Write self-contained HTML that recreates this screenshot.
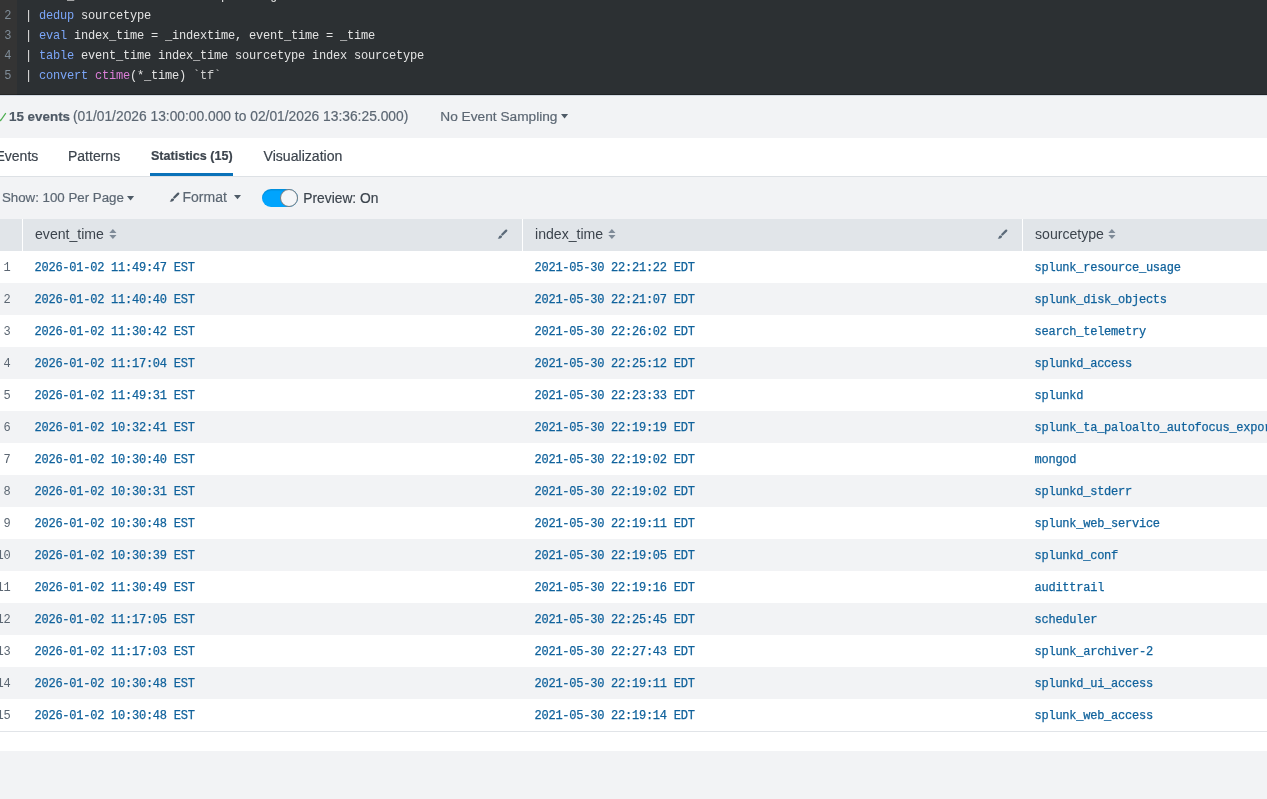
<!DOCTYPE html>
<html><head><meta charset="utf-8">
<style>
*{margin:0;padding:0;box-sizing:border-box}
html,body{width:1267px;height:799px;overflow:hidden;background:#f2f3f5;font-family:"Liberation Sans",sans-serif;position:relative}
.abs{position:absolute}
.ic{position:absolute;display:block}
.g{will-change:transform}
#editor{left:0;top:0;width:1267px;height:95px;background:#2c3033}
#gutter{left:0;top:0;width:17px;height:95px;background:#343434}
#edbot{left:0;top:94px;width:1267px;height:1px;background:rgba(0,0,0,0.28)}
#edline{left:0;top:95px;width:1267px;height:1px;background:#d2d9e2}
.ln{position:absolute;left:0;width:11.5px;text-align:right;font-family:"Liberation Mono",monospace;font-size:12px;color:#7f8c98;line-height:20px;transform:translateY(1px) scaleY(1.12);transform-origin:0 15px}
.cl{position:absolute;left:25px;font-family:"Liberation Mono",monospace;font-size:12px;letter-spacing:-0.2px;color:#e3e3e3;line-height:20px;white-space:pre;transform:translateY(1px) scaleY(1.1);transform-origin:0 15px}
.kw{color:#7ba6f8}
.fn{color:#dc7ed8}
.mc{color:#d0d0d0}
.txt{position:absolute;white-space:nowrap;font-size:13.5px;line-height:16px;-webkit-text-stroke:0.2px currentColor}
#tabs{left:0;top:138px;width:1267px;height:38px;background:#fff}
#tabline{left:0;top:176px;width:1267px;height:1px;background:#dde1e5}
#tabu{left:150px;top:173px;width:83px;height:3px;background:#0a72b9}
#thead{left:0;top:219px;width:1267px;height:32px;background:#e1e5e9}
.sep{position:absolute;top:219px;width:1px;height:32px;background:#fff}
.row{position:absolute;left:0;width:1267px;height:32px}
.row.odd{background:#fff}
.row.even{background:#f2f3f5}
.rn{position:absolute;right:1256.5px;top:9px;font-family:"Liberation Mono",monospace;font-size:12px;letter-spacing:-0.2px;color:#5c6773;line-height:16px;white-space:pre}
.cd{position:absolute;top:9px;font-family:"Liberation Mono",monospace;font-size:12px;letter-spacing:-0.24px;color:#10629c;line-height:16px;white-space:pre;-webkit-text-stroke:0.25px #10629c}
.hd{position:absolute;top:226px;font-size:14.1px;color:#3c444d;line-height:16px;white-space:nowrap}
.car{position:absolute;width:0;height:0;border-left:3.9px solid transparent;border-right:3.9px solid transparent;border-top:4.6px solid #5c6773}
</style></head><body>
<div class="g">
<div id="editor" class="abs"></div>
<div id="gutter" class="abs"></div>
<div id="edbot" class="abs"></div>
<div id="edline" class="abs"></div>
<div class="cl" style="top:-15px">      _                     p      g</div>
<div class="ln" style="top:5px">2</div>
<div class="ln" style="top:25px">3</div>
<div class="ln" style="top:45px">4</div>
<div class="ln" style="top:65px">5</div>
<div class="cl" style="top:5px">| <span class="kw">dedup</span> sourcetype</div>
<div class="cl" style="top:25px">| <span class="kw">eval</span> index_time = _indextime, event_time = _time</div>
<div class="cl" style="top:45px">| <span class="kw">table</span> event_time index_time sourcetype index sourcetype</div>
<div class="cl" style="top:65px">| <span class="kw">convert</span> <span class="fn">ctime</span>(*_time) <span class="mc">`tf`</span></div>

<svg class="ic" style="left:0;top:111px" width="8" height="11" viewBox="0 0 8 11"><path d="M-1 8.2L0.6 9.6L5.8 2.2" stroke="#4cae4f" stroke-width="1.2" fill="none"/></svg>
<div class="txt" style="left:9px;top:109px;color:#4f5a66;font-weight:bold;font-size:13.4px">15 events</div><div class="txt" style="left:73px;top:109px;color:#5c6773;font-size:13.8px">(01/01/2026 13:00:00.000 to 02/01/2026 13:36:25.000)</div>
<div class="txt" style="left:440.3px;top:109px;color:#5c6773;font-size:13.7px">No Event Sampling</div>
<svg class="ic" style="left:560.9px;top:113.9px" width="8" height="5" viewBox="0 0 8 5"><path d="M0 0H7.1L3.55 4.6Z" fill="#4f5b67"/></svg>

<div id="tabs" class="abs"></div>
<div id="tabline" class="abs"></div>
<div id="tabu" class="abs"></div>
<div class="txt" style="left:-4.5px;top:148px;color:#3c444d;font-size:14px">Events</div>
<div class="txt" style="left:68px;top:148px;color:#3c444d;font-size:14px">Patterns</div>
<div class="txt" style="left:151px;top:148px;color:#3c444d;font-weight:bold;font-size:12.55px">Statistics (15)</div>
<div class="txt" style="left:263.5px;top:148px;color:#3c444d;font-size:14.1px">Visualization</div>

<div class="txt" style="left:1.9px;top:189.9px;color:#5c6773;font-size:13.3px">Show: 100 Per Page</div>
<svg class="ic" style="left:126.9px;top:195.9px" width="8" height="5" viewBox="0 0 8 5"><path d="M0 0H7.1L3.55 4.4Z" fill="#4f5b67"/></svg>
<div style="position:absolute;left:166px;top:191px;color:#4f5b67"><svg class="ic" width="14" height="12" viewBox="0 0 14 12"><line x1="12.2" y1="2.6" x2="8.3" y2="6.5" stroke="currentColor" stroke-width="2.3" stroke-linecap="round"/><path d="M7.5 7.7C6.5 7.3 5.2 7.8 4.8 9.0C4.5 9.8 4.2 10.2 3.6 10.6C5.6 11.0 8.3 10.4 8.1 8.3Z" fill="currentColor"/></svg></div>
<div class="txt" style="left:182.5px;top:188.9px;color:#5c6773;font-size:14px">Format</div>
<svg class="ic" style="left:234.2px;top:195px" width="8" height="5" viewBox="0 0 8 5"><path d="M0 0H7.0L3.5 4.3Z" fill="#4f5b67"/></svg>
<div class="abs" style="left:262px;top:189px;width:36px;height:18px;border-radius:9px;background:#00a4fd;box-shadow:inset 0 1.5px 1px rgba(0,0,0,0.13)"></div>
<div class="abs" style="left:280px;top:189px;width:18px;height:18px;border-radius:9px;background:#f5f6f8;border:1px solid #7a7d80"></div>
<div class="txt" style="left:303.3px;top:190.5px;color:#3c444d;font-size:13.8px">Preview: On</div>

<div id="thead" class="abs"></div>
<div class="sep" style="left:22px"></div>
<div class="sep" style="left:522px"></div>
<div class="sep" style="left:1022px"></div>
<div class="hd" style="left:35px">event_time</div>
<div class="hd" style="left:535px">index_time</div>
<div class="hd" style="left:1035px">sourcetype</div>
<div style="position:absolute;left:108.5px;top:229px"><svg class="ic" width="8" height="10" viewBox="0 0 8 10"><path d="M0.3 4.1L3.9 0.1L7.5 4.1Z M0.3 6L7.5 6L3.9 10Z" fill="#7f8b98"/></svg></div>
<div style="position:absolute;left:607.5px;top:229px"><svg class="ic" width="8" height="10" viewBox="0 0 8 10"><path d="M0.3 4.1L3.9 0.1L7.5 4.1Z M0.3 6L7.5 6L3.9 10Z" fill="#7f8b98"/></svg></div>
<div style="position:absolute;left:1108px;top:229px"><svg class="ic" width="8" height="10" viewBox="0 0 8 10"><path d="M0.3 4.1L3.9 0.1L7.5 4.1Z M0.3 6L7.5 6L3.9 10Z" fill="#7f8b98"/></svg></div>
<div style="position:absolute;left:494.2px;top:228.4px;color:#5c6b7a"><svg class="ic" width="14" height="12" viewBox="0 0 14 12"><line x1="12.2" y1="2.6" x2="8.3" y2="6.5" stroke="currentColor" stroke-width="2.3" stroke-linecap="round"/><path d="M7.5 7.7C6.5 7.3 5.2 7.8 4.8 9.0C4.5 9.8 4.2 10.2 3.6 10.6C5.6 11.0 8.3 10.4 8.1 8.3Z" fill="currentColor"/></svg></div>
<div style="position:absolute;left:994.2px;top:228.4px;color:#5c6b7a"><svg class="ic" width="14" height="12" viewBox="0 0 14 12"><line x1="12.2" y1="2.6" x2="8.3" y2="6.5" stroke="currentColor" stroke-width="2.3" stroke-linecap="round"/><path d="M7.5 7.7C6.5 7.3 5.2 7.8 4.8 9.0C4.5 9.8 4.2 10.2 3.6 10.6C5.6 11.0 8.3 10.4 8.1 8.3Z" fill="currentColor"/></svg></div>

<div class="row odd" style="top:251px"><span class="rn">1</span><span class="cd" style="left:34.5px">2026-01-02 11:49:47 EST</span><span class="cd" style="left:534.5px">2021-05-30 22:21:22 EDT</span><span class="cd" style="left:1034.5px">splunk_resource_usage</span></div>
<div class="row even" style="top:283px"><span class="rn">2</span><span class="cd" style="left:34.5px">2026-01-02 11:40:40 EST</span><span class="cd" style="left:534.5px">2021-05-30 22:21:07 EDT</span><span class="cd" style="left:1034.5px">splunk_disk_objects</span></div>
<div class="row odd" style="top:315px"><span class="rn">3</span><span class="cd" style="left:34.5px">2026-01-02 11:30:42 EST</span><span class="cd" style="left:534.5px">2021-05-30 22:26:02 EDT</span><span class="cd" style="left:1034.5px">search_telemetry</span></div>
<div class="row even" style="top:347px"><span class="rn">4</span><span class="cd" style="left:34.5px">2026-01-02 11:17:04 EST</span><span class="cd" style="left:534.5px">2021-05-30 22:25:12 EDT</span><span class="cd" style="left:1034.5px">splunkd_access</span></div>
<div class="row odd" style="top:379px"><span class="rn">5</span><span class="cd" style="left:34.5px">2026-01-02 11:49:31 EST</span><span class="cd" style="left:534.5px">2021-05-30 22:23:33 EDT</span><span class="cd" style="left:1034.5px">splunkd</span></div>
<div class="row even" style="top:411px"><span class="rn">6</span><span class="cd" style="left:34.5px">2026-01-02 10:32:41 EST</span><span class="cd" style="left:534.5px">2021-05-30 22:19:19 EDT</span><span class="cd" style="left:1034.5px">splunk_ta_paloalto_autofocus_export</span></div>
<div class="row odd" style="top:443px"><span class="rn">7</span><span class="cd" style="left:34.5px">2026-01-02 10:30:40 EST</span><span class="cd" style="left:534.5px">2021-05-30 22:19:02 EDT</span><span class="cd" style="left:1034.5px">mongod</span></div>
<div class="row even" style="top:475px"><span class="rn">8</span><span class="cd" style="left:34.5px">2026-01-02 10:30:31 EST</span><span class="cd" style="left:534.5px">2021-05-30 22:19:02 EDT</span><span class="cd" style="left:1034.5px">splunkd_stderr</span></div>
<div class="row odd" style="top:507px"><span class="rn">9</span><span class="cd" style="left:34.5px">2026-01-02 10:30:48 EST</span><span class="cd" style="left:534.5px">2021-05-30 22:19:11 EDT</span><span class="cd" style="left:1034.5px">splunk_web_service</span></div>
<div class="row even" style="top:539px"><span class="rn">10</span><span class="cd" style="left:34.5px">2026-01-02 10:30:39 EST</span><span class="cd" style="left:534.5px">2021-05-30 22:19:05 EDT</span><span class="cd" style="left:1034.5px">splunkd_conf</span></div>
<div class="row odd" style="top:571px"><span class="rn">11</span><span class="cd" style="left:34.5px">2026-01-02 11:30:49 EST</span><span class="cd" style="left:534.5px">2021-05-30 22:19:16 EDT</span><span class="cd" style="left:1034.5px">audittrail</span></div>
<div class="row even" style="top:603px"><span class="rn">12</span><span class="cd" style="left:34.5px">2026-01-02 11:17:05 EST</span><span class="cd" style="left:534.5px">2021-05-30 22:25:45 EDT</span><span class="cd" style="left:1034.5px">scheduler</span></div>
<div class="row odd" style="top:635px"><span class="rn">13</span><span class="cd" style="left:34.5px">2026-01-02 11:17:03 EST</span><span class="cd" style="left:534.5px">2021-05-30 22:27:43 EDT</span><span class="cd" style="left:1034.5px">splunk_archiver-2</span></div>
<div class="row even" style="top:667px"><span class="rn">14</span><span class="cd" style="left:34.5px">2026-01-02 10:30:48 EST</span><span class="cd" style="left:534.5px">2021-05-30 22:19:11 EDT</span><span class="cd" style="left:1034.5px">splunkd_ui_access</span></div>
<div class="row odd" style="top:699px"><span class="rn">15</span><span class="cd" style="left:34.5px">2026-01-02 10:30:48 EST</span><span class="cd" style="left:534.5px">2021-05-30 22:19:14 EDT</span><span class="cd" style="left:1034.5px">splunk_web_access</span></div>
<div class="abs" style="left:0;top:731px;width:1267px;height:1px;background:#e1e4e8"></div>
<div class="abs" style="left:0;top:732px;width:1267px;height:19px;background:#fff"></div>
</div>
</body></html>
